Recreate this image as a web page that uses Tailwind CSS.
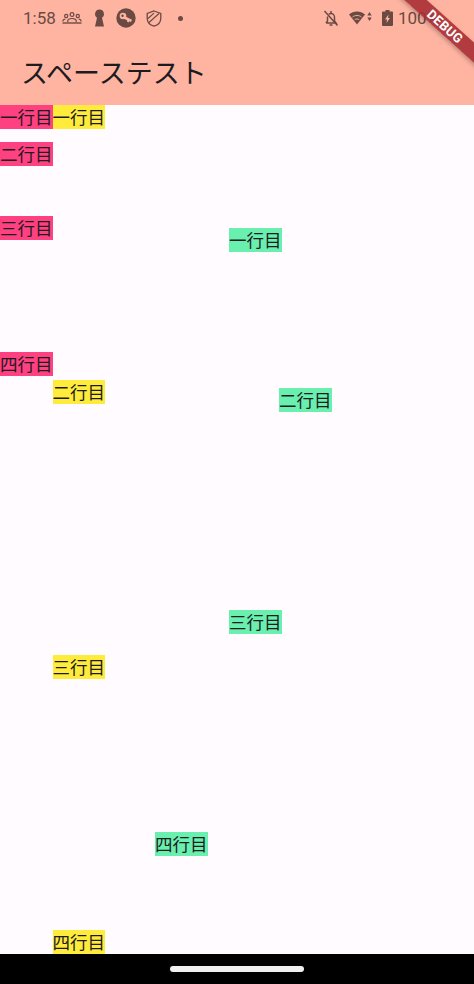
<!DOCTYPE html>
<html lang="ja">
<head>
  <meta charset="UTF-8" />
  <meta name="viewport" content="width=device-width, initial-scale=1" />
  <title>スペーステスト</title>
  <script src="https://cdn.jsdelivr.net/npm/@tailwindcss/browser@4"></script>
</head>
<body class="bg-[#fffbfe] font-['Noto_Sans_CJK_JP',sans-serif] text-[#1c1b1f]">
  <div class="relative flex h-[984px] w-[474px] flex-col overflow-hidden">
    <!-- app bar -->
    <header class="flex h-[105px] flex-col bg-[#ffb4a2]">
      <div class="flex h-[36px] items-center justify-between pl-[23px] pr-[21px] text-[#6a4a42]">
        <div class="flex items-center">
          <span class="font-['Roboto',sans-serif] text-[17px] leading-none">1:58</span>
          <svg class="ml-[6px] h-[12px] w-[20px]" viewBox="0 0 20 12" fill="none" stroke="currentColor" stroke-width="1.200">
            <circle cx="10" cy="2.600" r="1.900"/><circle cx="4.200" cy="4" r="1.600"/><circle cx="15.800" cy="4" r="1.600"/>
            <path d="M5.800 10V8.800c0-1.300 1.900-2.300 4.200-2.300s4.200 1 4.200 2.300V10M1 9.500V8.800C1 7.800 2 7.200 3.500 7M19 9.500V8.800C19 7.800 18 7.200 16.500 7"/>
            <path d="M.5 11h19" stroke-width="1.400"/>
          </svg>
          <svg class="ml-[12px] h-[18px] w-[11px]" viewBox="0 0 11 18" fill="currentColor">
            <path d="M5.500 .5a4.500 4.500 0 0 1 2.500 8.200L10 17.500H1L3 8.700A4.500 4.500 0 0 1 5.500 .5z"/>
          </svg>
          <svg class="ml-[11px] h-[20px] w-[20px]" viewBox="0 0 20 20">
            <circle cx="10" cy="10" r="9.700" fill="currentColor"/>
            <path d="M9.500 8.500l6.500 3.300-1 2.200-1.600-.8-.8 1.400-1.500-.8-.1-1.500-3-1.500z" fill="#ffb4a2"/>
            <circle cx="7" cy="8" r="3.300" fill="#ffb4a2"/>
            <circle cx="6.500" cy="7.700" r="1.200" fill="currentColor"/>
          </svg>
          <svg class="ml-[10px] h-[17px] w-[16px]" viewBox="0 0 16 17" fill="none" stroke="currentColor" stroke-width="1.300">
            <path d="M8 1l6.800 2.400v4.800c0 3.800-2.900 6.800-6.800 8-3.900-1.200-6.800-4.200-6.800-8V3.400z"/>
            <path d="M3 12.500L13 3.500M2 8.500L8 3.200" stroke-width="1.100"/>
          </svg>
          <span class="ml-[16px] h-[5px] w-[5px] rounded-full bg-current"></span>
        </div>
        <div class="flex items-center">
          <svg class="h-[18px] w-[16px]" viewBox="0 0 16 18" fill="none" stroke="currentColor" stroke-width="1.500">
            <path d="M3 14h10l-1.500-2V8.500c0-2.200-1.500-4-3.500-4-.8 0-1.500.2-2.100.7M4.500 7.500V12L3 14M6.500 16h3M8 2v2.500M1.500 2l13 14.500"/>
          </svg>
          <svg class="ml-[10px] h-[14px] w-[25px]" viewBox="0 0 25 14" fill="currentColor">
            <path d="M8 13.500L0 3.500C2.200 1.500 5 .5 8 .5s5.800 1 8 3z"/>
            <path d="M3.500 6C4.800 5 6.300 4.500 8 4.500S11.200 5 12.500 6M5.700 8.700C6.400 8.200 7.200 8 8 8s1.600.2 2.300.7" fill="none" stroke="#ffb4a2" stroke-width=".9"/>
            <path d="M20.500 1l2.200 3.500h-4.400zM20.500 10l-2.200-3.500h4.400z"/>
          </svg>
          <svg class="ml-[8px] h-[16px] w-[11px]" viewBox="0 0 11 16" fill="currentColor">
            <path d="M3.500 0h4v1.500H10a1 1 0 0 1 1 1V15a1 1 0 0 1-1 1H1a1 1 0 0 1-1-1V2.500a1 1 0 0 1 1-1h2.500z"/>
            <path d="M6.500 4.500L3 9.500h2L4.500 13 8 8H6z" fill="#ffb4a2"/>
          </svg>
          <span class="ml-[5px] w-[55px] font-['Roboto',sans-serif] text-[17px] leading-none">100%</span>
        </div>
      </div>
      <h1 class="pl-[21px] pt-[16px] text-[27px] font-normal leading-[40px]">スペーステスト</h1>
    </header>

    <!-- three columns of spaced labels -->
    <main class="relative flex h-[849px] w-full">
      <div class="flex w-[52.500px] flex-col">
        <span class="h-6 bg-[#ff4081] text-[17.500px] leading-6">一行目</span>
        <span class="mt-[13px] h-6 bg-[#ff4081] text-[17.500px] leading-6">二行目</span>
        <span class="mt-[50px] h-6 bg-[#ff4081] text-[17.500px] leading-6">三行目</span>
        <span class="mt-[112px] h-6 bg-[#ff4081] text-[17.500px] leading-6">四行目</span>
      </div>
      <div class="flex w-[52.500px] flex-col justify-between">
        <span class="h-6 bg-[#ffeb3b] text-[17.500px] leading-6">一行目</span>
        <span class="h-6 bg-[#ffeb3b] text-[17.500px] leading-6">二行目</span>
        <span class="h-6 bg-[#ffeb3b] text-[17.500px] leading-6">三行目</span>
        <span class="h-6 bg-[#ffeb3b] text-[17.500px] leading-6">四行目</span>
      </div>
      <div class="flex flex-col">
        <span class="ml-[124px] mt-[123px] h-6 w-[52.500px] bg-[#69f0ae] text-[17.500px] leading-6">一行目</span>
        <span class="ml-[174px] mt-[136px] h-6 w-[52.500px] bg-[#69f0ae] text-[17.500px] leading-6">二行目</span>
        <span class="ml-[124px] mt-[198px] h-6 w-[52.500px] bg-[#69f0ae] text-[17.500px] leading-6">三行目</span>
        <span class="ml-[50px] mt-[198px] h-6 w-[52.500px] bg-[#69f0ae] text-[17.500px] leading-6">四行目</span>
      </div>
    </main>

    <!-- android nav bar -->
    <footer class="flex h-[30px] justify-center bg-black pt-[12px]">
      <span class="h-[6px] w-[134px] rounded-full bg-[#f0f0f0]"></span>
    </footer>

    <!-- debug banner -->
    <div class="absolute right-[-31px] top-[19px] h-[15px] w-[120px] rotate-[42deg] bg-[#a82e34]/90 text-center font-['Roboto',sans-serif] text-[13px] font-bold leading-[15px] tracking-wide text-white shadow-[0_2px_4px_rgba(0,0,0,0.25)]">DEBUG</div>
  </div>
</body>
</html>
